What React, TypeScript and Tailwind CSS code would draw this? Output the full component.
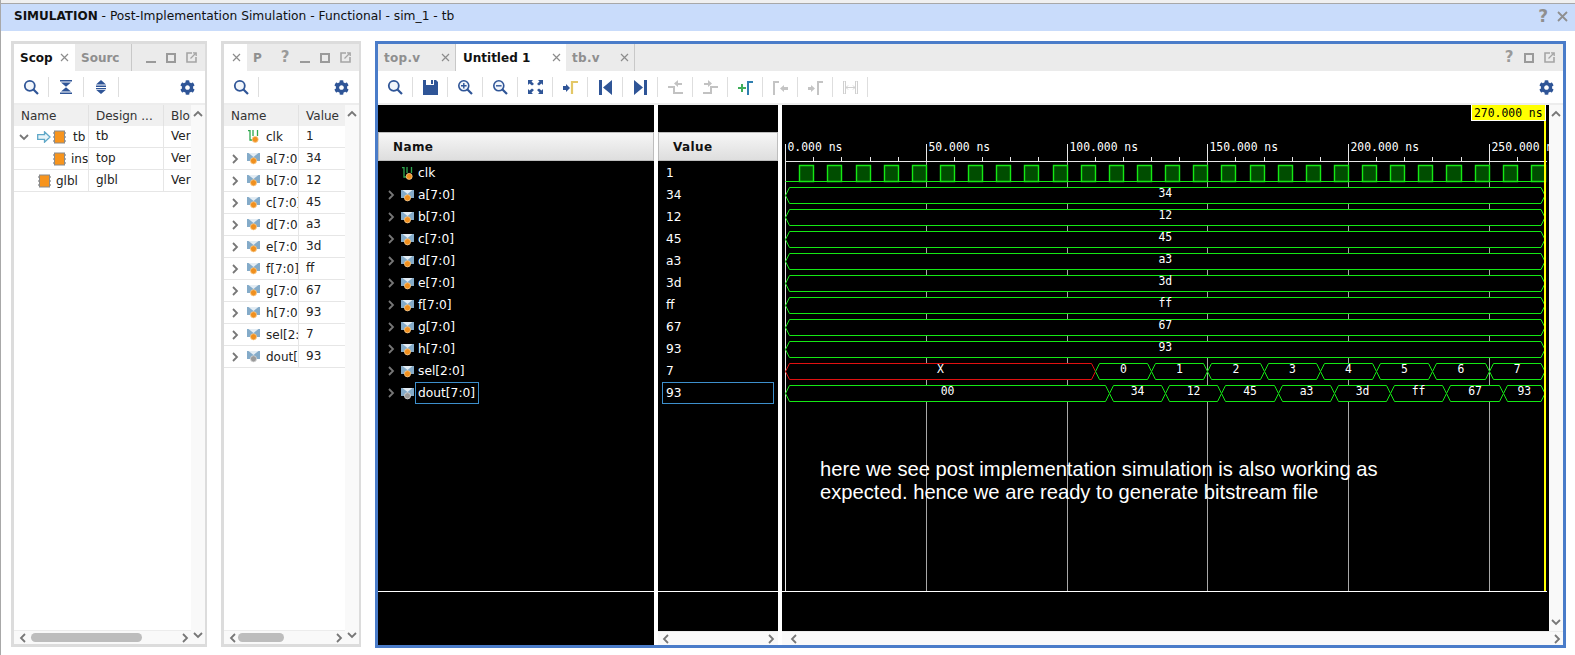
import { FaCog } from "react-icons/fa"

const ui = "font-['DejaVu_Sans',sans-serif] text-[12px]"
const NAVY = "#2f5597"
const GREEN = "#14e814"

const signals = [
  { name: "a[7:0]", value: "34" },
  { name: "b[7:0]", value: "12" },
  { name: "c[7:0]", value: "45" },
  { name: "d[7:0]", value: "a3" },
  { name: "e[7:0]", value: "3d" },
  { name: "f[7:0]", value: "ff" },
  { name: "g[7:0]", value: "67" },
  { name: "h[7:0]", value: "93" },
  { name: "sel[2:0]", value: "7" },
  { name: "dout[7:0]", value: "93" },
]

const tx = (t: number) => Math.floor(785.7 + 2.814 * t) + 0.5

function Search() {
  return (
    <svg width="16" height="16" viewBox="0 0 16 16" fill="none">
      <circle cx="6.800" cy="6.800" r="5" stroke={NAVY} strokeWidth="1.800" fill="#f2f6fb" />
      <path d="M10.500 10.500L15 15" stroke={NAVY} strokeWidth="2.200" />
    </svg>
  )
}

function ZoomIcon({ plus }: { plus?: boolean }) {
  return (
    <svg width="16" height="16" viewBox="0 0 16 16" fill="none">
      <circle cx="6.800" cy="6.800" r="5" stroke={NAVY} strokeWidth="1.600" fill="#f2f6fb" />
      <path d="M10.500 10.500L15 15" stroke={NAVY} strokeWidth="2.200" />
      <path d={plus ? "M4 6.800h5.600M6.800 4v5.600" : "M4 6.800h5.600"} stroke={NAVY} strokeWidth="1.400" />
    </svg>
  )
}

function Save() {
  return (
    <svg width="15" height="15" viewBox="0 0 15 15">
      <path d="M0 0h3v5h8V0h2l2 2v13H0z" fill={NAVY} />
      <rect x="8" y="0" width="2" height="4" fill={NAVY} />
    </svg>
  )
}

function Fit() {
  return (
    <svg width="15" height="14" viewBox="0 0 15 14" fill={NAVY}>
      <path d="M0 0h5L3.500 1.500 6 4 4 5.500 1.500 3.500 0 5z" />
      <path d="M15 0h-5l1.500 1.500L9 4l2 1.500 2.500-2L15 5z" />
      <path d="M0 14h5L3.500 12.500 6 10 4 8.500 1.500 10.500 0 9z" />
      <path d="M15 14h-5l1.500-1.500L9 10l2-1.500 2.500 2L15 9z" />
    </svg>
  )
}

function Goto() {
  return (
    <svg width="15" height="15" viewBox="0 0 15 15">
      <path d="M0 6h3V4l4 4-4 4v-2H0z" fill={NAVY} />
      <path d="M9 14V2h6" stroke="#e3c766" strokeWidth="2.200" fill="none" />
    </svg>
  )
}

function Edge({ last }: { last?: boolean }) {
  return (
    <svg width="13" height="15" viewBox="0 0 13 15" fill={NAVY}>
      <path d={last ? "M10 0h3v15h-3zM0 0l9 7.500L0 15z" : "M0 0h3v15H0zM13 0L4 7.500 13 15z"} />
    </svg>
  )
}

function TransNav({ next }: { next?: boolean }) {
  return (
    <svg width="15" height="15" viewBox="0 0 15 15" fill="none">
      <path d={next ? "M0 13h8V7h7" : "M0 7h6v6h9"} stroke="#c2c2c2" strokeWidth="2" />
      <path d={next ? "M1 3h4V0l4 3.500L5 7V5H1z" : "M14 3h-4V0L6 3.500 10 7V5h4z"} fill="#c2c2c2" />
    </svg>
  )
}

function AddMarker() {
  return (
    <svg width="15" height="15" viewBox="0 0 15 15">
      <path d="M3 4h2v3h3v2H5v3H3V9H0V7h3z" fill="#3fae5a" />
      <path d="M10 15V2h5" stroke="#2f7fb0" strokeWidth="2" fill="none" />
    </svg>
  )
}

function MarkerNav({ next }: { next?: boolean }) {
  return (
    <svg width="15" height="15" viewBox="0 0 15 15">
      {next ? (
        <>
          <path d="M0 7h3V5l4 3.500L3 12v-2H0z" fill="#c4c4c4" />
          <path d="M10 15V2h5" stroke="#c4c4c4" strokeWidth="2" fill="none" />
        </>
      ) : (
        <>
          <path d="M1 15V2h5" stroke="#c4c4c4" strokeWidth="2" fill="none" />
          <path d="M15 7h-4V5L7 8.500l4 3.500v-2h4z" fill="#c4c4c4" />
        </>
      )}
    </svg>
  )
}

function Swap() {
  return (
    <svg width="15" height="13" viewBox="0 0 15 13" fill="none" stroke="#d0d0d0">
      <path d="M.5 0v13h2V0zM12.500 0v13h2V0z" />
      <path d="M3 6.500h9M5 4.500l-2 2 2 2M10 4.500l2 2-2 2" />
    </svg>
  )
}

function Collapse() {
  return (
    <svg width="14" height="14" viewBox="0 0 14 14" fill={NAVY}>
      <path d="M1 0h12v1.500H1zM2 2.500h10L7 6.800zM7 7.200l5 4.300H2zM1 12.500h12V14H1z" />
    </svg>
  )
}

function Expand() {
  return (
    <svg width="14" height="14" viewBox="0 0 14 14" fill={NAVY}>
      <path d="M7 0l5 4.500H2zM2 5.500h10V7H2zM2 8h10v1H2zM2 9.800h10L7 14z" />
    </svg>
  )
}

function Gear() {
  return <FaCog size={15} color={NAVY} />
}

function Chip() {
  return (
    <svg width="13" height="14" viewBox="0 0 13 14" className="shrink-0">
      <path d="M0 3h2M0 7h2M0 11h2M11 3h2M11 7h2M11 11h2" stroke="#666" />
      <rect x="1.500" y="1" width="10" height="12" fill="#f7941d" stroke="#8a8a8a" />
    </svg>
  )
}

function ArrowOut() {
  return (
    <svg width="14" height="12" viewBox="0 0 14 12" className="shrink-0">
      <path d="M.7 3.700h6.800V.8L13 6l-5.500 5.200V8.300H.7z" fill="#e8f4f9" stroke="#5fa8c8" strokeWidth="1.300" />
    </svg>
  )
}

function BusIcon({ grey }: { grey?: boolean }) {
  return (
    <svg width="13" height="13" viewBox="0 0 13 13" className="shrink-0">
      <path d="M0 1h13v8H0z" fill="#84abc9" />
      <path d="M1.500 1h10L6.500 5z" fill="#e4edf4" />
      <path d="M5 9.500h3v2H5z" fill="#84abc9" />
      <circle cx="6.500" cy="8.800" r="3.100" fill={grey ? "#9a9a9a" : "#f0901f"} stroke={grey ? "#d8d8d8" : "#f9cd90"} strokeWidth="0.800" />
    </svg>
  )
}

function ClkIcon() {
  return (
    <svg width="11" height="13" viewBox="0 0 11 13" className="shrink-0">
      <path d="M0 .6h2V10h3M5 0v6M9.500 0v6" stroke="#2fa84f" strokeWidth="1.300" fill="none" />
      <circle cx="7.200" cy="9.400" r="3" fill="#f0901f" stroke="#f9cd90" strokeWidth="0.800" />
    </svg>
  )
}

function Chevron({ dir }: { dir: "left" | "right" | "up" | "down" }) {
  const d = {
    left: "M6 1L2 5l4 4",
    right: "M2 1l4 4-4 4",
    up: "M1 7l4-4 4 4",
    down: "M1 3l4 4 4-4",
  }[dir]
  const vertical = dir === "up" || dir === "down"
  return (
    <svg width={vertical ? 10 : 8} height={10} viewBox={vertical ? "0 0 10 10" : "0 0 8 10"} className="shrink-0">
      <path d={d} fill="none" stroke="#777" strokeWidth="1.800" />
    </svg>
  )
}

function Close() {
  return (
    <svg width="9" height="9" viewBox="0 0 9 9" className="shrink-0">
      <path d="M1 1l7 7M8 1L1 8" stroke="#8c8c8c" strokeWidth="1.200" />
    </svg>
  )
}

function WinButtons({ help, min = true }: { help?: boolean; min?: boolean }) {
  return (
    <>
      {help && <span className="w-5 text-center text-[15px] font-bold leading-none text-[#9a9a9a]">?</span>}
      {min && (
        <div className="flex w-5 justify-center">
          <div className="mt-[9px] h-[2px] w-[10px] bg-[#9a9a9a]" />
        </div>
      )}
      <div className="flex w-5 justify-center">
        <div className="h-[10px] w-[10px] border-2 border-[#9a9a9a]" />
      </div>
      <div className="flex w-5 justify-center">
        <svg width="11" height="11" viewBox="0 0 11 11" fill="none">
          <path d="M6 1H1v9h9V5" stroke="#a5a5a5" strokeWidth="1.600" />
          <path d="M4.500 6.500L10 1M7 .8h3.200V4" stroke="#a5a5a5" strokeWidth="1.300" />
        </svg>
      </div>
    </>
  )
}

function Tool({ children, sep = true }: { children: React.ReactNode; sep?: boolean }) {
  return (
    <>
      <div className="flex h-full w-[34px] items-center justify-center">{children}</div>
      {sep && <div className="h-5 w-px bg-[#dedede]" />}
    </>
  )
}

function HScroll({ left, right, thumbLeft, thumbWidth }: { left: number; right: number; thumbLeft?: number; thumbWidth?: number }) {
  return (
    <div className="relative h-[14px] shrink-0 border-t border-[#ececec] bg-[#f9f9f9]">
      <div className="absolute top-[2px]" style={{ left }}>
        <Chevron dir="left" />
      </div>
      {thumbWidth && (
        <div className="absolute top-[2px] h-[9px] rounded-[5px] bg-[#bdbdbd]" style={{ left: thumbLeft, width: thumbWidth }} />
      )}
      <div className="absolute top-[2px]" style={{ left: right }}>
        <Chevron dir="right" />
      </div>
    </div>
  )
}

function VScroll() {
  return (
    <div className="flex h-full w-[14px] shrink-0 flex-col items-center justify-between bg-[#f9f9f9] py-[4px]">
      <Chevron dir="up" />
      <Chevron dir="down" />
    </div>
  )
}

function Th({ w, pl, children }: { w: string; pl: string; children: React.ReactNode }) {
  return <div className={`${w} ${pl} h-full shrink-0 overflow-hidden whitespace-nowrap border-r border-[#e2e2e2] leading-[22px] text-[#333]`}>{children}</div>
}

function ScopePanel() {
  const rows = [
    { pad: "pl-[5px]", label: "tb", design: "tb", node: <><Chevron dir="down" /><span className="w-[8px] shrink-0" /><ArrowOut /><span className="w-[2px] shrink-0" /><Chip /></>, textPad: "pl-[7px]" },
    { pad: "pl-[39px]", label: "ins", design: "top", node: <Chip />, textPad: "pl-[5px]" },
    { pad: "pl-[24px]", label: "glbl", design: "glbl", node: <Chip />, textPad: "pl-[5px]" },
  ]
  return (
    <div className={`flex h-[606px] w-[196px] shrink-0 flex-col border-[3px] border-r-2 border-[#dcdcdc] ${ui}`}>
      <div className="flex h-[27px] shrink-0 items-center bg-[#ebebeb]">
        <div className="flex h-full w-[61px] items-center justify-between bg-white pl-[6px] pr-[6px] font-bold text-[#111]">
          Scop <Close />
        </div>
        <div className="flex h-full w-[56px] items-center overflow-hidden whitespace-nowrap pl-[6px] font-bold text-[#8f8f8f]">Sourc</div>
        <div className="h-full w-px bg-[#c8c8c8]" />
        <div className="ml-auto flex items-center pr-[4px]">
          <WinButtons />
        </div>
      </div>
      <div className="flex h-[32px] shrink-0 items-center border-b-0 bg-white">
        <Tool><Search /></Tool>
        <Tool><Collapse /></Tool>
        <Tool><Expand /></Tool>
        <div className="ml-auto pr-[10px]"><Gear /></div>
      </div>
      <div className="h-[2px] shrink-0 bg-[#ededed]" />
      <div className="flex min-h-0 flex-1">
        <div className="flex min-w-0 flex-1 flex-col">
          <div className="flex h-[21px] shrink-0 bg-[#f0f0f0]">
            <Th w="w-[75px]" pl="pl-[7px]">Name</Th>
            <Th w="w-[75px]" pl="pl-[7px]">Design ...</Th>
            <div className="overflow-hidden pl-[7px] leading-[22px] text-[#333]">Blo</div>
          </div>
          {rows.map((r) => (
            <div key={r.label} className="flex h-[22px] shrink-0 border-b border-[#e6e6e6] text-[#222]">
              <div className={`flex w-[75px] shrink-0 items-center overflow-hidden whitespace-nowrap border-r border-[#e6e6e6] ${r.pad}`}>
                {r.node}
                <span className={r.textPad}>{r.label}</span>
              </div>
              <div className="w-[75px] shrink-0 border-r border-[#e6e6e6] pl-[7px] leading-[21px]">{r.design}</div>
              <div className="overflow-hidden pl-[7px] leading-[21px]">Ver</div>
            </div>
          ))}
          <div className="flex-1" />
          <HScroll left={5} right={167} thumbLeft={17} thumbWidth={111} />
        </div>
        <VScroll />
      </div>
    </div>
  )
}

function ObjectsPanel() {
  return (
    <div className={`ml-[14px] flex h-[606px] w-[140px] shrink-0 flex-col border-[3px] border-r-2 border-[#dcdcdc] ${ui}`}>
      <div className="flex h-[27px] shrink-0 items-center bg-[#ebebeb]">
        <div className="flex h-full w-[23px] items-center justify-center bg-white pl-[2px]">
          <Close />
        </div>
        <div className="pl-[6px] font-bold text-[#8f8f8f]">P</div>
        <div className="ml-auto flex items-center pr-[4px]">
          <WinButtons help />
        </div>
      </div>
      <div className="flex h-[32px] shrink-0 items-center bg-white">
        <Tool><Search /></Tool>
        <div className="ml-auto pr-[10px]"><Gear /></div>
      </div>
      <div className="h-[2px] shrink-0 bg-[#ededed]" />
      <div className="flex min-h-0 flex-1">
        <div className="flex min-w-0 flex-1 flex-col">
          <div className="flex h-[21px] shrink-0 bg-[#f0f0f0]">
            <Th w="w-[75px]" pl="pl-[7px]">Name</Th>
            <div className="overflow-hidden pl-[7px] leading-[22px] text-[#333]">Value</div>
          </div>
          <div className="flex h-[22px] shrink-0 border-b border-[#e6e6e6] text-[#222]">
            <div className="flex w-[75px] shrink-0 items-center overflow-hidden border-r border-[#e6e6e6] pl-[24px]">
              <ClkIcon />
              <span className="pl-[7px]">clk</span>
            </div>
            <div className="pl-[7px] leading-[21px]">1</div>
          </div>
          {signals.map((s) => (
            <div key={s.name} className="flex h-[22px] shrink-0 border-b border-[#e6e6e6] text-[#222]">
              <div className="flex w-[75px] shrink-0 items-center overflow-hidden whitespace-nowrap border-r border-[#e6e6e6] pl-[7px]">
                <Chevron dir="right" />
                <span className="w-[8px] shrink-0" />
                <BusIcon grey={s.name.startsWith("dout")} />
                <span className="pl-[6px]">{s.name}</span>
              </div>
              <div className="pl-[7px] leading-[21px]">{s.value}</div>
            </div>
          ))}
          <div className="flex-1" />
          <HScroll left={5} right={111} thumbLeft={14} thumbWidth={46} />
        </div>
        <VScroll />
      </div>
    </div>
  )
}

function WaveHeader({ pl, children }: { pl: string; children: React.ReactNode }) {
  return (
    <div className={`${pl} h-[29px] shrink-0 border border-[#bdbdbd] bg-gradient-to-b from-[#f6f6f6] to-[#dedede] text-[12px] font-bold leading-[29px] tracking-[0.4px] text-[#111]`}>
      {children}
    </div>
  )
}

function NameColumn() {
  return (
    <div className="flex h-full w-[276px] shrink-0 flex-col bg-black text-[12.250px] text-white">
      <div className="h-[27px] shrink-0" />
      <WaveHeader pl="pl-[14px]">Name</WaveHeader>
      <div className="flex h-[22px] shrink-0 items-center pl-[24px] pt-[2px]">
        <ClkIcon />
        <span className="pl-[5px]">clk</span>
      </div>
      {signals.map((s) => (
        <div key={s.name} className="flex h-[22px] shrink-0 items-center pl-[9px] pt-[2px]">
          <Chevron dir="right" />
          <span className="w-[6px] shrink-0" />
          <BusIcon grey={s.name.startsWith("dout")} />
          {s.name.startsWith("dout") ? (
            <span className="ml-[1px] border border-[#3d8fcc] pl-[2px] pr-[3px] leading-[20px]">{s.name}</span>
          ) : (
            <span className="pl-[4px]">{s.name}</span>
          )}
        </div>
      ))}
      <div className="flex-1" />
      <div className="h-px shrink-0 bg-white" />
      <div className="h-[53px] shrink-0" />
    </div>
  )
}

function ValueColumn() {
  return (
    <div className="ml-[4px] flex h-full w-[120px] shrink-0 flex-col bg-black text-[12.250px] text-white">
      <div className="h-[27px] shrink-0" />
      <WaveHeader pl="pl-[14px]">Value</WaveHeader>
      <div className="h-[22px] shrink-0 pl-[8px] leading-[24px]">1</div>
      {signals.map((s) =>
        s.name.startsWith("dout") ? (
          <div key={s.name} className="ml-[4px] mr-[4px] mt-px h-[22px] shrink-0 border border-[#3d8fcc] pl-[3px] leading-[20px]">
            {s.value}
          </div>
        ) : (
          <div key={s.name} className="h-[22px] shrink-0 pl-[8px] leading-[24px]">{s.value}</div>
        ),
      )}
      <div className="flex-1" />
      <div className="h-px shrink-0 bg-white" />
      <div className="h-[39px] shrink-0" />
      <HScroll left={4} right={109} />
    </div>
  )
}

function hexPath(a: number, b: number, top: number) {
  const bot = top + 16
  const mid = top + 8
  return `M${a} ${mid}L${a + 4} ${top}H${b - 4}L${b} ${mid}L${b - 4} ${bot}H${a + 4}Z`
}

function BusSegment({ from, to, top, label, color = GREEN }: { from: number; to: number; top: number; label: string; color?: string }) {
  return (
    <>
      <path d={hexPath(from, to, top)} fill="black" stroke={color} strokeWidth="1" />
      <text x={(from + to) / 2} y={top + 9} textAnchor="middle" fill="white" fontSize="11.400" fontFamily="'DejaVu Sans Mono', monospace">
        {label}
      </text>
    </>
  )
}

function Wave() {
  const majors = [50, 100, 150, 200, 250]
  const minors = Array.from({ length: 26 }, (_, i) => (i + 1) * 10).filter((t) => t % 50 !== 0)
  const clockHighs = Array.from({ length: 27 }, (_, i) => [tx(i * 10 + 5), tx(i * 10 + 10)])
  const endX = tx(270) - 0.5
  const sel = ["0", "1", "2", "3", "4", "5", "6", "7"]
  const dout = ["34", "12", "45", "a3", "3d", "ff", "67", "93"]
  const busTop = (i: number) => 187.5 + i * 22

  return (
    <div className="ml-[4px] flex h-full w-[781px] shrink-0 flex-col">
      <div className="flex h-[526px] shrink-0">
        <svg width="767" height="526" viewBox="782 105 767 526" className="block shrink-0 bg-black">
          <path d={`M${tx(0)} 144V591`} stroke="#e8e8e8" />
          {majors.map((t) => (
            <g key={t}>
              <path d={`M${tx(t)} 162V591`} stroke="#a8a8a8" />
              <path d={`M${tx(t)} 144V162`} stroke="#e8e8e8" />
              <text x={tx(t) + 2} y="151" fill="white" fontSize="11.400" fontFamily="'DejaVu Sans Mono', monospace">
                {t}.000 ns
              </text>
            </g>
          ))}
          <text x={tx(0) + 2} y="151" fill="white" fontSize="11.400" fontFamily="'DejaVu Sans Mono', monospace">
            0.000 ns
          </text>
          <path d="M785 161.500H1547" stroke="#e8e8e8" />
          {minors.map((t) => (
            <path key={t} d={`M${tx(t)} 157V161`} stroke="#e8e8e8" />
          ))}

          {clockHighs.map(([a, b]) => (
            <path key={a} d={`M${a} 181.500V165.500H${b}V181.500Z`} fill="#004d00" stroke={GREEN} strokeWidth="1.400" />
          ))}
          <path d={`M${tx(0)} 181.500H${tx(270)}`} stroke={GREEN} />

          {signals.slice(0, 8).map((s, i) => (
            <BusSegment key={s.name} from={tx(0)} to={endX} top={busTop(i)} label={s.value} />
          ))}

          <BusSegment from={tx(0)} to={tx(110)} top={busTop(8)} label="X" color="#e01010" />
          {sel.map((v, i) => (
            <BusSegment key={v} from={tx(110 + i * 20)} to={i === 7 ? endX : tx(130 + i * 20)} top={busTop(8)} label={v} />
          ))}
          <BusSegment from={tx(0)} to={tx(115)} top={busTop(9)} label="00" />
          {dout.map((v, i) => (
            <BusSegment key={v + i} from={tx(115 + i * 20)} to={i === 7 ? endX : tx(135 + i * 20)} top={busTop(9)} label={v} />
          ))}

          <path d="M782 591.500H1547" stroke="white" />
          <rect x="1544" y="120" width="2" height="471" fill="#ffff00" />
          <rect x="1471.500" y="104.500" width="74" height="16" fill="#ffff00" stroke="white" />
          <text x="1474" y="117" fill="black" fontSize="11.400" fontFamily="'DejaVu Sans Mono', monospace">
            270.000 ns
          </text>
        </svg>
        <VScroll />
      </div>
      <HScroll left={8} right={771} />
    </div>
  )
}

function WaveWindow() {
  return (
    <div className={`relative ml-[14px] flex h-[607px] w-[1191px] shrink-0 flex-col border-[3px] border-[#4a7cc9] ${ui}`}>
      <div className="flex h-[27px] shrink-0 items-center bg-[#ebebeb]">
        <div className="flex h-full w-[78px] items-center border-r border-[#c8c8c8] pl-[6px] font-bold tracking-[0.3px] text-[#8f8f8f]">
          top.v
          <span className="ml-auto pr-[5px]"><Close /></span>
        </div>
        <div className="flex h-full w-[110px] items-center bg-white pl-[7px] font-bold text-[#111]">
          Untitled 1
          <span className="ml-auto pr-[5px]"><Close /></span>
        </div>
        <div className="flex h-full w-[69px] items-center border-r border-[#c8c8c8] pl-[6px] font-bold tracking-[0.3px] text-[#8f8f8f]">
          tb.v
          <span className="ml-auto pr-[5px]"><Close /></span>
        </div>
        <div className="ml-auto flex items-center pr-[4px]">
          <WinButtons help min={false} />
        </div>
      </div>
      <div className="flex h-[32px] shrink-0 items-center bg-white">
        <Tool><Search /></Tool>
        <Tool><Save /></Tool>
        <Tool><ZoomIcon plus /></Tool>
        <Tool><ZoomIcon /></Tool>
        <Tool><Fit /></Tool>
        <Tool><Goto /></Tool>
        <Tool><Edge /></Tool>
        <Tool><Edge last /></Tool>
        <Tool><TransNav /></Tool>
        <Tool><TransNav next /></Tool>
        <Tool><AddMarker /></Tool>
        <Tool><MarkerNav /></Tool>
        <Tool><MarkerNav next /></Tool>
        <Tool><Swap /></Tool>
        <div className="ml-auto pr-[9px]"><Gear /></div>
      </div>
      <div className="h-[2px] shrink-0 bg-[#ededed]" />
      <div className="flex min-h-0 flex-1 bg-white">
        <NameColumn />
        <ValueColumn />
        <Wave />
      </div>
      <div className="absolute left-[442px] top-[414px] w-[640px] font-['Liberation_Sans',sans-serif] text-[20.200px] leading-[23px] text-white">
        here we see post implementation simulation is also working as
        <br />
        expected. hence we are ready to generate bitstream file
      </div>
    </div>
  )
}

export default function App() {
  return (
    <div className="flex h-[655px] w-[1575px] flex-col overflow-hidden border-l border-[#a8a8a8] bg-white">
      <div className="h-[3px] shrink-0 bg-[#f0f0f0]" />
      <div className="h-px shrink-0 bg-[#a8a8a8]" />
      <div className={`flex h-[27px] shrink-0 items-center justify-between bg-[#c9dcfb] pb-[2px] pl-[13px] pr-[7px] text-[#111] ${ui}`}>
        <div>
          <span className="font-bold">SIMULATION</span>
          <span className="text-[12.250px]"> - Post-Implementation Simulation - Functional - sim_1 - tb</span>
        </div>
        <div className="flex items-center gap-[9px]">
          <span className="text-[17px] font-bold leading-none text-[#8f8f8f]">?</span>
          <svg width="11" height="11" viewBox="0 0 11 11">
            <path d="M1 1l9 9M10 1l-9 9" stroke="#8f8f8f" strokeWidth="1.800" />
          </svg>
        </div>
      </div>
      <div className="flex flex-1 items-start pl-[10px] pt-[10px]">
        <ScopePanel />
        <ObjectsPanel />
        <WaveWindow />
      </div>
    </div>
  )
}
